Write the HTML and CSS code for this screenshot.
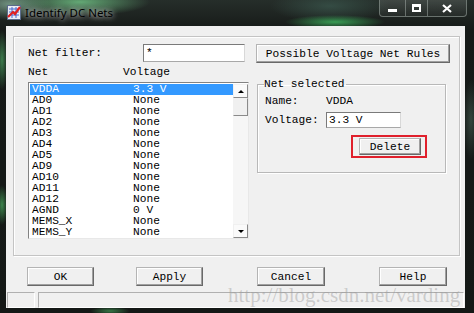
FILE: index.html
```html
<!DOCTYPE html>
<html lang="en">
  <head>
    <meta charset="UTF-8" />
    <title>Identify DC Nets</title>
    <link rel="stylesheet" href="styles.css">
  </head>

  <body>
    <div class="window">
      <div class="titlebar">
        <svg class="app-icon" width="14" height="15" viewBox="0 0 14 15">
          <rect x="0.5" y="0.5" width="13" height="14" fill="#e8ecf4" stroke="#5a6a8a" />
          <path d="M2 4h10M2 7h10M2 10h10M5 2v11M9 2v11" stroke="#4a6ad0" stroke-width="1" />
          <path d="M1 12 L6 7 L8 9 L13 2" stroke="#e02020" stroke-width="2.2" fill="none" />
        </svg>
        <span class="title">Identify DC Nets</span>
        <div class="caption-buttons">
          <div class="cap cap-min"><span class="glyph-min"></span></div>
          <div class="cap cap-max"><span class="glyph-max"></span></div>
          <div class="cap cap-close">
            <svg width="10" height="9" viewBox="0 0 10 9">
              <path d="M1 1 L9 8 M9 1 L1 8" stroke="#fff" stroke-width="2.2" />
            </svg>
          </div>
        </div>
      </div>

      <div class="client">
        <div class="group">
          <div class="filter-row">
            <span class="label filter-label">Net filter:</span>
            <div class="field filter-field">*</div>
            <button class="btn rules-btn">Possible Voltage Net Rules</button>
          </div>

          <div class="main-row">
            <div class="nets">
              <div class="list-head">
                <span class="col-name">Net</span>
                <span>Voltage</span>
              </div>
              <div class="listbox">
                <div class="rows">
                  <div class="row selected"><span class="col-name">VDDA</span><span>3.3 V</span></div>
                  <div class="row"><span class="col-name">AD0</span><span>None</span></div>
                  <div class="row"><span class="col-name">AD1</span><span>None</span></div>
                  <div class="row"><span class="col-name">AD2</span><span>None</span></div>
                  <div class="row"><span class="col-name">AD3</span><span>None</span></div>
                  <div class="row"><span class="col-name">AD4</span><span>None</span></div>
                  <div class="row"><span class="col-name">AD5</span><span>None</span></div>
                  <div class="row"><span class="col-name">AD9</span><span>None</span></div>
                  <div class="row"><span class="col-name">AD10</span><span>None</span></div>
                  <div class="row"><span class="col-name">AD11</span><span>None</span></div>
                  <div class="row"><span class="col-name">AD12</span><span>None</span></div>
                  <div class="row"><span class="col-name">AGND</span><span>0 V</span></div>
                  <div class="row"><span class="col-name">MEMS_X</span><span>None</span></div>
                  <div class="row"><span class="col-name">MEMS_Y</span><span>None</span></div>
                </div>
                <div class="scrollbar">
                  <div class="sb-arrow"><span class="tri-up"></span></div>
                  <div class="sb-thumb"></div>
                  <div class="sb-track"></div>
                  <div class="sb-arrow"><span class="tri-down"></span></div>
                </div>
              </div>
            </div>

            <fieldset class="selected-box">
              <legend>Net selected</legend>
              <div class="info-row">
                <span class="label info-label">Name:</span>
                <span>VDDA</span>
              </div>
              <div class="info-row voltage-row">
                <span class="label info-label">Voltage:</span>
                <div class="field voltage-field">3.3 V</div>
              </div>
              <div class="highlight">
                <button class="btn delete-btn">Delete</button>
              </div>
            </fieldset>
          </div>
        </div>

        <div class="actions">
          <button class="btn action-btn ok-btn">OK</button>
          <button class="btn action-btn apply-btn">Apply</button>
          <button class="btn action-btn cancel-btn">Cancel</button>
          <button class="btn action-btn help-btn">Help</button>
        </div>

        <div class="statusbar">
          <div class="pane pane-first"></div>
          <div class="pane pane-main"></div>
        </div>
      </div>

      <div class="watermark">http://blog.csdn.net/varding</div>
    </div>
  </body>
</html>
```

FILE: styles.css
```css
:root {
  --face: #f0f0f0;
  --shadow: #a0a0a0;
  --dark-shadow: #696969;
  --select-bg: #3399ff;
  --dialog-font: "Liberation Mono", "Courier New", monospace;
}

* {
  box-sizing: border-box;
}

body {
  margin: 0;
  background: #111;
}

.window {
  position: relative;
  width: 474px;
  height: 313px;
  overflow: hidden;
  background:
    radial-gradient(ellipse 70px 14px at 80px 2px, rgba(110, 190, 130, 0.85), transparent),
    radial-gradient(ellipse 40px 16px at 10px 4px, rgba(130, 170, 150, 0.8), transparent),
    radial-gradient(ellipse 50px 7px at 335px 22px, rgba(60, 170, 90, 0.9), transparent),
    radial-gradient(ellipse 60px 16px at 330px 6px, rgba(60, 90, 80, 0.7), transparent),
    radial-gradient(ellipse 6px 30px at 2px 60px, rgba(70, 150, 90, 0.8), transparent),
    radial-gradient(ellipse 6px 20px at 2px 205px, rgba(70, 160, 90, 0.8), transparent),
    radial-gradient(ellipse 20px 4px at 110px 311px, rgba(70, 160, 90, 0.7), transparent),
    radial-gradient(ellipse 8px 40px at 471px 120px, rgba(60, 80, 70, 0.8), transparent),
    linear-gradient(#262e2a, #161a18 30px, #141816);
}

/* title bar */
.titlebar {
  display: flex;
  align-items: flex-start;
  height: 26px;
}

.app-icon {
  margin: 5px 0 0 7px;
}

.title {
  margin: 5px 0 0 4px;
  font-family: "Noto Sans", "Open Sans", sans-serif;
  font-size: 11.5px;
  line-height: 15px;
  color: #000;
  text-shadow: 0 0 5px rgba(255, 255, 255, 0.8), 0 0 9px rgba(255, 255, 255, 0.6);
}

.caption-buttons {
  display: flex;
  margin-left: auto;
  margin-right: 7px;
  height: 17px;
  border: 1px solid rgba(200, 210, 205, 0.45);
  border-top: none;
  border-radius: 0 0 4px 4px;
  overflow: hidden;
}

.cap {
  display: flex;
  align-items: center;
  justify-content: center;
  height: 100%;
  background: linear-gradient(rgba(255, 255, 255, 0.12), rgba(255, 255, 255, 0.03));
}

.cap + .cap {
  border-left: 1px solid rgba(200, 210, 205, 0.4);
}

.cap-min {
  width: 25px;
}

.cap-max {
  width: 22px;
}

.cap-close {
  width: 39px;
}

.glyph-min {
  width: 9px;
  height: 3px;
  margin-top: 4px;
  background: #fff;
}

.glyph-max {
  width: 9px;
  height: 8px;
  border: 2px solid #fff;
  border-top-width: 3px;
}

/* client area */
.client {
  width: 459px;
  height: 282px;
  margin-left: 6px;
  background: var(--face);
  font-family: var(--dialog-font);
  font-size: 11.2px;
  color: #000;
}

.group {
  width: 447px;
  height: 220px;
  margin-left: 7px;
  padding: 7px 9px 0 14px;
  position: relative;
  top: 10px;
  border: 1px solid #c4c4c4;
  box-shadow: 1px 1px 0 #fff, inset 1px 1px 0 #fff;
}

.filter-row {
  display: flex;
  align-items: flex-start;
  height: 19px;
}

.filter-label {
  width: 115px;
  line-height: 19px;
}

.field {
  background: #fff;
  border: 1px solid;
  border-color: #7a7a7a #d8d8d8 #a8a8a8 #7a7a7a;
  padding-left: 2px;
}

.filter-field {
  width: 102px;
  height: 18px;
  line-height: 16px;
}

.btn {
  font-family: var(--dialog-font);
  font-size: 11.2px;
  color: #000;
  background: var(--face);
  border: 1px solid;
  border-color: #b4b4b4 var(--dark-shadow) var(--dark-shadow) #b4b4b4;
  box-shadow: inset -1px -1px 0 var(--shadow), inset 1px 1px 0 #fff;
  padding: 0;
  text-align: center;
}

.rules-btn {
  width: 194px;
  height: 19px;
  margin-left: 11px;
}

.main-row {
  display: flex;
  align-items: flex-start;
}

.nets {
  width: 221px;
}

.list-head {
  display: flex;
  height: 19px;
  line-height: 19px;
}

.list-head .col-name {
  width: 95px;
}

.listbox {
  display: flex;
  height: 157px;
  padding: 1px 0 0 1px;
  background: #fff;
  border: 1px solid;
  border-color: #828282 #e8e8e8 #e8e8e8 #828282;
}

.rows {
  width: 203px;
}

.row {
  display: flex;
  height: 11px;
  line-height: 11px;
  padding-left: 2px;
}

.row .col-name {
  width: 101px;
}

.row.selected {
  background: var(--select-bg);
  color: #fff;
}

/* scrollbar */
.scrollbar {
  display: flex;
  flex-direction: column;
  width: 15px;
  height: 154px;
  background: #f6f6f6;
}

.sb-arrow,
.sb-thumb {
  display: flex;
  align-items: center;
  justify-content: center;
  background: #fafafa;
  border: 1px solid;
  border-color: #f0f0f0 #8a8a8a #8a8a8a #f0f0f0;
}

.sb-arrow {
  height: 14px;
}

.sb-thumb {
  height: 18px;
  background: var(--face);
}

.sb-track {
  flex: 1;
}

.tri-up,
.tri-down {
  width: 0;
  height: 0;
  border-left: 3px solid transparent;
  border-right: 3px solid transparent;
}

.tri-up {
  border-bottom: 3px solid #000;
}

.tri-down {
  border-top: 3px solid #000;
}

/* net selected group */
.selected-box {
  width: 189px;
  margin: 15px 0 0 8px;
  padding: 4px 7px 14px 7px;
  border: 1px solid #b8b8b8;
  box-shadow: 1px 1px 0 #fff, inset 1px 1px 0 #fff;
}

.selected-box legend {
  padding: 0 1px 0 0;
  margin-left: -1px;
  line-height: 12px;
}

.info-row {
  display: flex;
  align-items: center;
  height: 14px;
}

.info-label {
  width: 61px;
}

.voltage-row {
  height: 16px;
  margin-top: 4px;
}

.voltage-field {
  width: 75px;
  height: 16px;
  line-height: 14px;
}

.highlight {
  width: 76px;
  height: 23px;
  margin: 7px 0 0 86px;
  padding: 1px 4px 2px 6px;
  border: 2px solid #e0202c;
}

.delete-btn {
  width: 62px;
  height: 17px;
}

/* bottom buttons */
.actions {
  display: flex;
  margin-top: 21px;
  height: 19px;
}

.action-btn {
  height: 19px;
  width: 67px;
}

.ok-btn {
  margin-left: 21px;
}

.apply-btn {
  margin-left: 42px;
}

.cancel-btn {
  margin-left: 54px;
  width: 68px;
}

.help-btn {
  margin-left: 54px;
  width: 68px;
}

.statusbar {
  display: flex;
  height: 16px;
  margin-top: 6px;
}

.pane {
  height: 16px;
  border: 1px solid;
  border-color: #b0b0b0 #fff #fff #b0b0b0;
}

.pane-first {
  width: 28px;
  margin-left: 1px;
}

.pane-main {
  width: 426px;
  margin-left: 3px;
}

.watermark {
  position: absolute;
  left: 228px;
  top: 285px;
  font-family: "Liberation Serif", "Times New Roman", serif;
  font-size: 21px;
  line-height: 21px;
  color: rgba(150, 150, 150, 0.42);
  white-space: nowrap;
}
```
